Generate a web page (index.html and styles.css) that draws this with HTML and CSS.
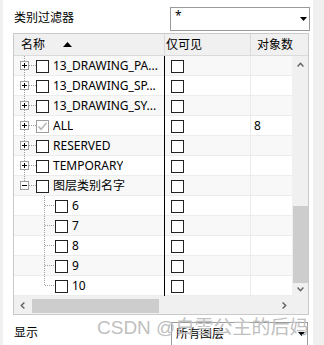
FILE: index.html
```html
<!DOCTYPE html>
<html lang="zh-CN">
<head>
<meta charset="utf-8">
<title>类别过滤器</title>
<link rel="stylesheet" href="styles.css">
</head>
<body>
<div class="window">
  <div class="panel">
    <div class="field-row top-row">
      <span class="field-label">类别过滤器</span>
      <div class="combo combo-top"><span class="combo-text star">*</span><svg class="combo-arrow" width="7" height="4" viewBox="0 0 7 4"><path d="M0 0H7L3.5 4Z" fill="#000"/></svg></div>
    </div>

    <div class="tree">
      <div class="header">
        <div class="hcell h-name"><span>名称</span><svg class="sort" width="9" height="5" viewBox="0 0 9 5"><path d="M0 5L4.5 0L9 5Z" fill="#000"/></svg></div>
        <div class="hcell h-vis">仅可见</div>
        <div class="hcell h-count">对象数</div>
      </div>
      <div class="viewport">
        <div class="rows">
          <div class="row alt">
            <div class="c-name"><span class="branch"><svg class="expander" width="9" height="9" viewBox="0 0 9 9"><rect x=".5" y=".5" width="8" height="8" fill="#fff" stroke="#a0a0a0"/><path d="M2 4.5H7M4.5 2V7" stroke="#000"/></svg></span><span class="cb"></span><span class="label">13_DRAWING_PA...</span></div>
            <div class="divider"></div>
            <div class="c-vis"><span class="cb"></span></div>
            <div class="c-count"></div>
          </div>
          <div class="row">
            <div class="c-name"><span class="branch"><svg class="expander" width="9" height="9" viewBox="0 0 9 9"><rect x=".5" y=".5" width="8" height="8" fill="#fff" stroke="#a0a0a0"/><path d="M2 4.5H7M4.5 2V7" stroke="#000"/></svg></span><span class="cb"></span><span class="label">13_DRAWING_SP...</span></div>
            <div class="divider"></div>
            <div class="c-vis"><span class="cb"></span></div>
            <div class="c-count"></div>
          </div>
          <div class="row alt">
            <div class="c-name"><span class="branch"><svg class="expander" width="9" height="9" viewBox="0 0 9 9"><rect x=".5" y=".5" width="8" height="8" fill="#fff" stroke="#a0a0a0"/><path d="M2 4.5H7M4.5 2V7" stroke="#000"/></svg></span><span class="cb"></span><span class="label">13_DRAWING_SY...</span></div>
            <div class="divider"></div>
            <div class="c-vis"><span class="cb"></span></div>
            <div class="c-count"></div>
          </div>
          <div class="row">
            <div class="c-name"><span class="branch"><svg class="expander" width="9" height="9" viewBox="0 0 9 9"><rect x=".5" y=".5" width="8" height="8" fill="#fff" stroke="#a0a0a0"/><path d="M2 4.5H7M4.5 2V7" stroke="#000"/></svg></span><svg class="cb-svg" width="13" height="13" viewBox="0 0 13 13"><rect x=".5" y=".5" width="12" height="12" fill="#fff" stroke="#9c9c9c"/><path d="M2.5 6.5L5 9.2L10.5 3" fill="none" stroke="#b8b8b8" stroke-width="1.6"/></svg><span class="label">ALL</span></div>
            <div class="divider"></div>
            <div class="c-vis"><span class="cb"></span></div>
            <div class="c-count">8</div>
          </div>
          <div class="row alt">
            <div class="c-name"><span class="branch"><svg class="expander" width="9" height="9" viewBox="0 0 9 9"><rect x=".5" y=".5" width="8" height="8" fill="#fff" stroke="#a0a0a0"/><path d="M2 4.5H7M4.5 2V7" stroke="#000"/></svg></span><span class="cb"></span><span class="label">RESERVED</span></div>
            <div class="divider"></div>
            <div class="c-vis"><span class="cb"></span></div>
            <div class="c-count"></div>
          </div>
          <div class="row">
            <div class="c-name"><span class="branch"><svg class="expander" width="9" height="9" viewBox="0 0 9 9"><rect x=".5" y=".5" width="8" height="8" fill="#fff" stroke="#a0a0a0"/><path d="M2 4.5H7M4.5 2V7" stroke="#000"/></svg></span><span class="cb"></span><span class="label">TEMPORARY</span></div>
            <div class="divider"></div>
            <div class="c-vis"><span class="cb"></span></div>
            <div class="c-count"></div>
          </div>
          <div class="row alt">
            <div class="c-name"><span class="branch last"><svg class="expander" width="9" height="9" viewBox="0 0 9 9"><rect x=".5" y=".5" width="8" height="8" fill="#fff" stroke="#a0a0a0"/><path d="M2 4.5H7" stroke="#000"/></svg></span><span class="cb"></span><span class="label">图层类别名字</span></div>
            <div class="divider"></div>
            <div class="c-vis"><span class="cb"></span></div>
            <div class="c-count"></div>
          </div>
          <div class="row">
            <div class="c-name"><span class="indent"></span><span class="branch child"></span><span class="cb sub"></span><span class="label">6</span></div>
            <div class="divider"></div>
            <div class="c-vis"><span class="cb"></span></div>
            <div class="c-count"></div>
          </div>
          <div class="row alt">
            <div class="c-name"><span class="indent"></span><span class="branch child"></span><span class="cb sub"></span><span class="label">7</span></div>
            <div class="divider"></div>
            <div class="c-vis"><span class="cb"></span></div>
            <div class="c-count"></div>
          </div>
          <div class="row">
            <div class="c-name"><span class="indent"></span><span class="branch child"></span><span class="cb sub"></span><span class="label">8</span></div>
            <div class="divider"></div>
            <div class="c-vis"><span class="cb"></span></div>
            <div class="c-count"></div>
          </div>
          <div class="row alt">
            <div class="c-name"><span class="indent"></span><span class="branch child"></span><span class="cb sub"></span><span class="label">9</span></div>
            <div class="divider"></div>
            <div class="c-vis"><span class="cb"></span></div>
            <div class="c-count"></div>
          </div>
          <div class="row">
            <div class="c-name"><span class="indent"></span><span class="branch child last"></span><span class="cb sub"></span><span class="label">10</span></div>
            <div class="divider"></div>
            <div class="c-vis"><span class="cb"></span></div>
            <div class="c-count"></div>
          </div>
        </div>
        <div class="vscroll">
          <div class="vbtn up"><svg width="7" height="5" viewBox="0 0 7 5"><path d="M0.6 4.4L3.5 1.3L6.4 4.4" fill="none" stroke="#606060" stroke-width="1.4"/></svg></div>
          <div class="vtrack"><div class="vthumb"></div></div>
          <div class="vbtn down"><svg width="7" height="5" viewBox="0 0 7 5"><path d="M0.6 0.6L3.5 3.7L6.4 0.6" fill="none" stroke="#606060" stroke-width="1.4"/></svg></div>
        </div>
      </div>
      <div class="hscroll">
        <div class="hbtn left"><svg width="5" height="7" viewBox="0 0 5 7"><path d="M4.4 0.6L1.3 3.5L4.4 6.4" fill="none" stroke="#606060" stroke-width="1.4"/></svg></div>
        <div class="htrack"><div class="hthumb"></div></div>
        <div class="hbtn right"><svg width="5" height="7" viewBox="0 0 5 7"><path d="M0.6 0.6L3.7 3.5L0.6 6.4" fill="none" stroke="#606060" stroke-width="1.4"/></svg></div>
        <div class="corner"></div>
      </div>
    </div>

    <div class="field-row bottom-row">
      <span class="field-label">显示</span>
      <div class="combo combo-bottom"><span class="combo-text">所有图层</span><svg class="combo-arrow" width="7" height="4" viewBox="0 0 7 4"><path d="M0 0H7L3.5 4Z" fill="#000"/></svg></div>
    </div>
  </div>
  <div class="watermark">CSDN @白雪公主的后妈</div>
</div>
</body>
</html>
```
FILE: styles.css
```css
* { box-sizing: border-box; }
html, body { margin: 0; padding: 0; }
body {
  font-family: "Noto Sans", "Noto Sans CJK SC", sans-serif;
  font-size: 12px;
  color: #000;
  background: #f0f0f0;
}
.window {
  position: relative;
  width: 324px;
  height: 345px;
  overflow: hidden;
  background: #f0f0f0;
}
.panel {
  margin-left: 3px;
  width: 310px;
  height: 345px;
  background: #fff;
  padding-left: 10px;
}
.field-row {
  display: grid;
  grid-template-columns: 157px auto;
  align-items: start;
}
.top-row { height: 33px; padding-top: 7px; }
.bottom-row { margin-top: 7px; }
.field-label {
  padding-left: 1px;
  line-height: 22px;
  white-space: nowrap;
}
.combo {
  height: 24px;
  border: 1px solid #9a9a9a;
  background: #fff;
  display: flex;
  justify-content: space-between;
  padding: 0 1px 0 4px;
}
.combo-top { width: 140px; align-items: center; }
.combo-bottom { width: 137px; margin-left: 1px; align-items: center; }
.combo-text { line-height: 20px; }
.star { align-self: flex-start; line-height: 16px; }
.combo-arrow { flex: none; margin-right: 1px; }

.tree {
  width: 296px;
  height: 282px;
  border: 1px solid #cacaca;
  display: flex;
  flex-direction: column;
  overflow: hidden;
}
.header {
  height: 22px;
  flex: none;
  display: flex;
  background: #f0f0f0;
  border-bottom: 1px solid #dadada;
}
.hcell {
  line-height: 21px;
  white-space: nowrap;
}
.h-name {
  width: 151px;
  border-right: 1px solid #dadada;
  padding-left: 7px;
  display: flex;
  align-items: center;
}
.sort { margin-left: 18px; margin-top: -1px; }
.h-vis { width: 86px; border-right: 1px solid #dadada; padding-left: 1px; }
.h-count { flex: 1; padding-left: 6px; }

.viewport { display: flex; height: 240px; flex: none; }
.rows { width: 278px; flex: none; overflow: hidden; }
.row {
  display: flex;
  height: 20px;
  background: linear-gradient(to top, #ececec 1px, #fff 1px);
}
.row.alt { background: linear-gradient(to top, #ececec 1px, #f8f8f8 1px); }
.c-name {
  width: 150px;
  flex: none;
  display: flex;
  align-items: flex-start;
  overflow: hidden;
  white-space: nowrap;
}
.divider { width: 1px; flex: none; background: #000; }
.c-vis {
  width: 86px;
  flex: none;
  border-right: 1px solid #ececec;
  padding-left: 6px;
  display: flex;
  align-items: flex-start;
}
.c-count { flex: 1; padding-left: 3px; line-height: 20px; }

.indent { width: 20px; flex: none; }
.branch { position: relative; flex: none; width: 20px; height: 20px; }
.branch::before {
  content: "";
  position: absolute;
  left: 10px;
  top: 0;
  width: 1px;
  height: 20px;
  background: repeating-linear-gradient(to bottom, #a0a0a0 0 1px, transparent 1px 2px);
}
.branch.last::before { height: 10px; }
.branch::after {
  content: "";
  position: absolute;
  left: 15px;
  top: 9px;
  width: 7px;
  height: 1px;
  background: repeating-linear-gradient(to right, #a0a0a0 0 1px, transparent 1px 2px);
}
.branch.child::after { left: 11px; width: 10px; }
.expander { position: absolute; left: 6px; top: 5px; }

.cb {
  flex: none;
  width: 13px;
  height: 13px;
  margin-top: 4px;
  border: 1px solid #222;
  background: #fff;
}
.c-name .cb, .cb-svg { margin-left: 2px; }
.c-name .cb.sub { margin-left: 1px; }
.cb-svg { flex: none; margin-top: 4px; }
.label { margin-left: 4px; line-height: 20px; overflow: hidden; }

.vscroll {
  width: 16px;
  flex: none;
  display: flex;
  flex-direction: column;
  background: #f0f0f0;
}
.vbtn { display: flex; justify-content: center; align-items: center; flex: none; padding-left: 1px; }
.vbtn.up { height: 17px; }
.vbtn.down { height: 13px; }
.vtrack { flex: 1; }
.vthumb { margin-top: 133px; margin-left: 1px; height: 77px; background: #cdcdcd; }

.hscroll {
  height: 18px;
  flex: none;
  display: flex;
  background: #f0f0f0;
}
.hbtn { display: flex; align-items: center; justify-content: center; flex: none; padding-top: 1px; }
.hbtn.left { width: 17px; }
.hbtn.right { width: 16px; }
.htrack { flex: 1; }
.hthumb { margin-top: 3px; margin-left: 1px; width: 127px; height: 14px; background: #cdcdcd; }
.corner { width: 16px; flex: none; }

.watermark {
  position: absolute;
  left: 97px;
  top: 315px;
  font-family: "Liberation Sans", "Noto Sans CJK SC", sans-serif;
  font-size: 19px;
  line-height: 26px;
  color: #c0c0c0;
  white-space: nowrap;
  pointer-events: none;
}
```
